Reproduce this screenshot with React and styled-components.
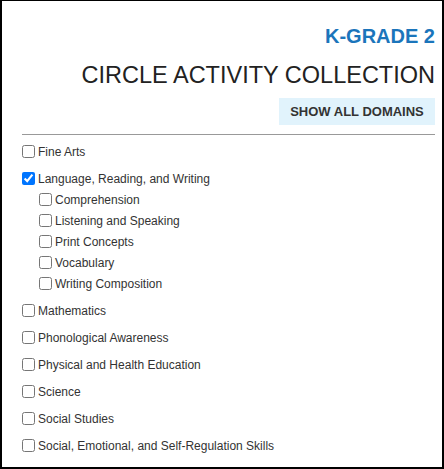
import React from 'react';
import styled, { createGlobalStyle } from 'styled-components';

const GlobalStyle = createGlobalStyle`
  body {
    margin: 0;
    background: #fff;
    font-family: "Liberation Sans", Arial, sans-serif;
  }
`;

const Panel = styled.div`
  box-sizing: border-box;
  width: 444px;
  height: 469px;
  border: 2px solid #000;
  border-top-width: 1px;
  padding: 0 7px 0 20px;
  display: flex;
  flex-direction: column;
`;

const Header = styled.div`
  display: flex;
  flex-direction: column;
  align-items: flex-end;
`;

const Grade = styled.div`
  margin-top: 24px;
  font-size: 20px;
  line-height: 22px;
  font-weight: bold;
  color: #1b75bb;
`;

const Title = styled.h1`
  margin: 15px 0 0;
  font-size: 23.5px;
  line-height: 26px;
  font-weight: normal;
  color: #222;
`;

const ShowAll = styled.button`
  margin-top: 10px;
  width: 156px;
  height: 27px;
  border: none;
  background: #e1f3fc;
  color: #333;
  font-family: inherit;
  font-size: 13px;
  font-weight: bold;
  padding: 0;
`;

const Rule = styled.hr`
  width: 100%;
  box-sizing: border-box;
  margin: 9px 0 0;
  border: none;
  border-top: 1px solid #999;
`;

const List = styled.ul`
  list-style: none;
  margin: 6px 0 0;
  padding: 0;
`;

const Group = styled.li`
  margin-top: ${(p) => (p.$first ? 0 : 6)}px;
`;

const SubList = styled.ul`
  list-style: none;
  margin: 0;
  padding: 0 0 0 17px;
`;

const Row = styled.label`
  display: flex;
  align-items: center;
  height: 21px;
  font-size: 12px;
  color: #333;
`;

const Box = styled.input`
  width: 13px;
  height: 13px;
  margin: 0 3px 0 0;
`;

const domains = [
  { name: 'Fine Arts' },
  {
    name: 'Language, Reading, and Writing',
    checked: true,
    subs: ['Comprehension', 'Listening and Speaking', 'Print Concepts', 'Vocabulary', 'Writing Composition'],
  },
  { name: 'Mathematics' },
  { name: 'Phonological Awareness' },
  { name: 'Physical and Health Education' },
  { name: 'Science' },
  { name: 'Social Studies' },
  { name: 'Social, Emotional, and Self-Regulation Skills' },
];

const App = () => (
  <>
    <GlobalStyle />
    <Panel>
      <Header>
        <Grade>K-GRADE 2</Grade>
        <Title>CIRCLE ACTIVITY COLLECTION</Title>
        <ShowAll>SHOW ALL DOMAINS</ShowAll>
      </Header>
      <Rule />
      <List>
        {domains.map((d, i) => (
          <Group key={d.name} $first={i === 0}>
            <Row>
              <Box type="checkbox" defaultChecked={!!d.checked} />
              {d.name}
            </Row>
            {d.subs && (
              <SubList>
                {d.subs.map((s) => (
                  <li key={s}>
                    <Row>
                      <Box type="checkbox" />
                      {s}
                    </Row>
                  </li>
                ))}
              </SubList>
            )}
          </Group>
        ))}
      </List>
    </Panel>
  </>
);

export default App;
